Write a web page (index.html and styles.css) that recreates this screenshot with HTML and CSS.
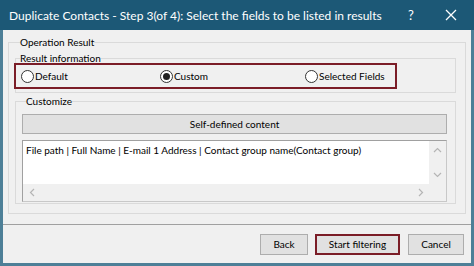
FILE: index.html
```html
<!DOCTYPE html>
<html>
<head>
<meta charset="utf-8">
<link rel="stylesheet" href="styles.css">
</head>
<body>
<div class="window">
  <div class="titlebar">
    <span class="title">Duplicate Contacts - Step 3(of 4): Select the fields to be listed in results</span>
    <span class="help">?</span>
    <span class="close">
      <svg width="12" height="12" viewBox="0 0 12 12"><path d="M1 1 L11 11 M11 1 L1 11" stroke="#fff" stroke-width="1.3" fill="none"/></svg>
    </span>
  </div>
  <div class="client">
    <fieldset class="group outer">
      <legend>Operation Result</legend>
      <fieldset class="group inner info">
        <legend>Result information</legend>
        <div class="radios">
          <label class="radio r1"><span class="dot"></span>Default</label>
          <label class="radio r2"><span class="dot checked"></span>Custom</label>
          <label class="radio r3"><span class="dot"></span>Selected Fields</label>
        </div>
      </fieldset>
      <fieldset class="group inner custom">
        <legend>Customize</legend>
        <div class="btn wide">Self-defined content</div>
        <div class="textbox">
          <div class="textarea">
            <div class="text">File path | Full Name | E-mail 1 Address | Contact group name(Contact group)</div>
            <div class="vscroll">
              <svg width="9" height="6" viewBox="0 0 9 6"><path d="M1 5 L4.5 1.5 L8 5" stroke="#b5b5b5" stroke-width="1.2" fill="none"/></svg>
              <svg width="9" height="6" viewBox="0 0 9 6"><path d="M1 1 L4.5 4.5 L8 1" stroke="#b5b5b5" stroke-width="1.2" fill="none"/></svg>
            </div>
          </div>
          <div class="hscroll">
            <svg width="6" height="9" viewBox="0 0 6 9"><path d="M5 1 L1.5 4.5 L5 8" stroke="#b5b5b5" stroke-width="1.2" fill="none"/></svg>
            <svg width="6" height="9" viewBox="0 0 6 9"><path d="M1 1 L4.5 4.5 L1 8" stroke="#b5b5b5" stroke-width="1.2" fill="none"/></svg>
          </div>
        </div>
      </fieldset>
    </fieldset>
    <div class="footer">
      <div class="btn back">Back</div>
      <div class="btn primary">Start filtering</div>
      <div class="btn cancel">Cancel</div>
    </div>
  </div>
</div>
</body>
</html>
```
FILE: styles.css
```css
* { box-sizing: border-box; }
html, body { margin: 0; padding: 0; }
body {
  width: 474px;
  height: 266px;
  overflow: hidden;
  font-family: "Lato", "Noto Sans", sans-serif;
  font-size: 10px;
  color: #000;
}
.window {
  width: 474px;
  height: 266px;
  background: #4d7f97;
  display: flex;
  flex-direction: column;
}
.titlebar {
  height: 30px;
  background: #1c5876;
  color: #fff;
  display: flex;
  align-items: center;
  padding-left: 9px;
  font-size: 12px;
  flex: none;
}
.title { flex: 1; white-space: nowrap; }
.help { width: 20px; margin-right: 20px; font-size: 13px; text-align: center; }
.close { width: 20px; margin-right: 13px; display: flex; justify-content: center; }
.client {
  flex: 1;
  margin: 0 3px 3px 3px;
  background: #f0f0f0;
  display: flex;
  flex-direction: column;
  padding-top: 5px;
}
.group {
  border: 1px solid #dadada;
  margin: 0;
  padding: 0;
  min-width: 0;
}
.group legend {
  padding: 0;
  margin-left: 5px;
  line-height: 14px;
  white-space: nowrap;
}
.outer {
  margin: 0 5px;
  padding: 0 9px 9px 6px;
}
.inner legend { margin-left: 4px; }
.info {
  margin-top: 2px;
  padding: 0 0 3px 0;
}
.radios {
  margin: -2px 0 0 -2px;
  width: 383px;
  height: 26px;
  border: 2px solid #7b1d27;
  display: flex;
  align-items: center;
  padding-left: 5px;
}
.radio { display: flex; align-items: center; white-space: nowrap; }
.r1 { width: 139px; }
.r2 { width: 145px; }
.dot {
  width: 13px;
  height: 13px;
  border: 1px solid #333;
  border-radius: 50%;
  background: #fff;
  margin-right: 1px;
  display: flex;
  align-items: center;
  justify-content: center;
}
.dot.checked::after {
  content: "";
  width: 7px;
  height: 7px;
  border-radius: 50%;
  background: #222;
}
.custom {
  margin-top: 1px;
  padding: 6px 8px 1px 6px;
}
.btn {
  height: 21px;
  background: #e1e1e1;
  border: 1px solid #adadad;
  display: flex;
  align-items: center;
  justify-content: center;
  white-space: nowrap;
}
.btn.wide { height: 20px; }
.textbox {
  margin-top: 6px;
  height: 62px;
  border: 1px solid #a0a0a0;
  border-right-color: #c8c8c8;
  border-bottom-color: #c8c8c8;
  display: flex;
  flex-direction: column;
}
.textarea { flex: 1; display: flex; background: #fff; min-height: 0; }
.text { flex: 1; padding: 3px 0 0 3px; white-space: nowrap; overflow: hidden; }
.vscroll {
  width: 17px;
  background: #f0f0f0;
  display: flex;
  flex-direction: column;
  justify-content: space-between;
  align-items: center;
  padding: 6px 0 6px;
}
.hscroll {
  height: 17px;
  background: #f0f0f0;
  display: flex;
  justify-content: space-between;
  align-items: center;
  padding: 0 22px 0 6px;
}
.footer {
  margin-top: auto;
  border-top: 1px solid #a0a0a0;
  height: 39px;
  display: flex;
  justify-content: flex-end;
  align-items: center;
  padding: 0 7px 0 0;
}
.back { width: 48px; margin-right: 7px; }
.primary { width: 85px; border: 2px solid #7b1d27; margin-right: 8px; }
.cancel { width: 56px; }
```
